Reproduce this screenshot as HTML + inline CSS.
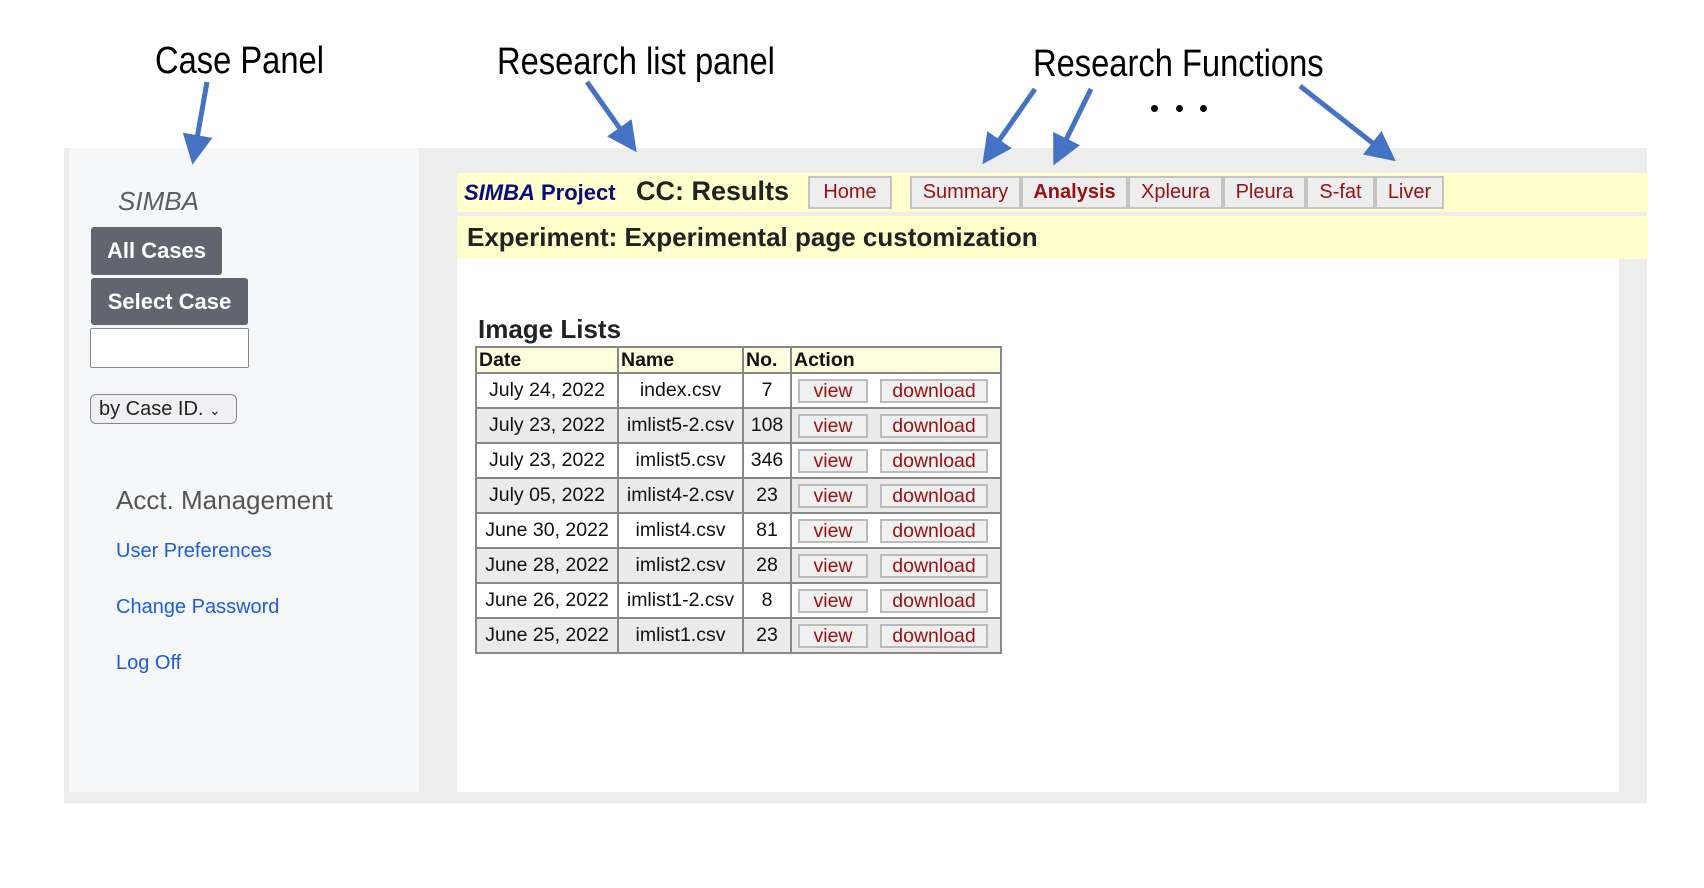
<!DOCTYPE html>
<html><head><meta charset="utf-8"><style>
*{margin:0;padding:0;box-sizing:border-box}
body{width:1704px;height:888px;background:#fff;position:relative;overflow:hidden;font-family:"Liberation Sans",Arial,sans-serif}
.a{position:absolute}
.ann{position:absolute;font-family:"Liberation Sans Narrow","Liberation Sans",sans-serif;font-size:38px;color:#000;line-height:1;white-space:nowrap;transform:scaleX(0.86);transform-origin:0 0}
.btn{position:absolute;background:#5f6670;color:#fff;font-weight:bold;font-size:22px;border-radius:3px;display:flex;align-items:center;justify-content:center}
.link{position:absolute;color:#1a5ce6;font-size:20px;white-space:nowrap}
.tab{position:absolute;top:176px;height:33px;background:#eeeeee;border:2px solid #c4c4c4;color:#9b1010;font-size:20px;display:flex;align-items:center;justify-content:center}
table{position:absolute;left:475px;top:346px;border-collapse:collapse;font-size:19.5px;color:#111}
td{border:2px solid #888;height:35px;text-align:center;padding:0 3px;white-space:nowrap}
tr.h td{background:#ffffe0;font-weight:bold;text-align:left;height:26px;padding:0 2px}
tr.g td{background:#ebebeb}
td.ac{text-align:left;padding-left:6px}
.vb,.db{display:inline-block;border:2px solid #bbb;background:#f0f0f0;color:#9b1010;height:24px;line-height:20px;font-size:19.5px;text-align:center}
.vb{width:70px}.db{width:108px;margin-left:12px}
</style></head><body>
<div class="ann" style="left:155px;top:42px">Case Panel</div>
<div class="ann" style="left:497px;top:43px">Research list panel</div>
<div class="ann" style="left:1033px;top:45px">Research Functions</div>
<div class="a" style="left:1151px;top:105px;width:7px;height:7px;background:#000;border-radius:50%"></div>
<div class="a" style="left:1176px;top:105px;width:7px;height:7px;background:#000;border-radius:50%"></div>
<div class="a" style="left:1200px;top:105px;width:7px;height:7px;background:#000;border-radius:50%"></div>
<div class="a" style="left:64px;top:148px;width:1583px;height:655px;background:#ededed"></div>
<div class="a" style="left:69px;top:148px;width:350px;height:644px;background:#f6f7f9"></div>
<div class="a" style="left:457px;top:259px;width:1162px;height:533px;background:#fff"></div>
<div class="a" style="left:457px;top:173px;width:1191px;height:39px;background:#ffffcc"></div>
<div class="a" style="left:457px;top:216px;width:1191px;height:43px;background:#ffffcc"></div>
<svg class="a" style="left:0;top:0;z-index:5" width="1704" height="888">
<defs><marker id="m" markerWidth="6" markerHeight="6" refX="3" refY="3" orient="auto"><path d="M0,0 L6,3 L0,6 Z" fill="#4472c4"/></marker></defs>
<g stroke="#4472c4" stroke-width="5" fill="none" marker-end="url(#m)">
<line x1="207" y1="82" x2="195" y2="150"/>
<line x1="587" y1="82" x2="628" y2="140"/>
<line x1="1035" y1="89" x2="991" y2="152"/>
<line x1="1091" y1="89" x2="1060" y2="152"/>
<line x1="1300" y1="86" x2="1384" y2="152"/>
</g></svg>
<div class="a" style="left:118px;top:186px;font-size:26px;font-style:italic;color:#5a5f66">SIMBA</div>
<div class="btn" style="left:91px;top:227px;width:131px;height:48px">All Cases</div>
<div class="btn" style="left:91px;top:278px;width:157px;height:47px">Select Case</div>
<div class="a" style="left:90px;top:328px;width:159px;height:40px;background:#fff;border:1px solid #888;border-radius:2px"></div>
<div class="a" style="left:90px;top:394px;width:147px;height:30px;background:#f0f0f2;border:1px solid #888;border-radius:6px;font-size:20px;padding:3px 8px;color:#222">by Case ID. <span style="font-size:14px">&#8964;</span></div>
<div class="a" style="left:116px;top:485px;font-size:26px;color:#555">Acct. Management</div>
<div class="link" style="left:116px;top:540px">User Preferences</div>
<div class="link" style="left:116px;top:596px">Change Password</div>
<div class="link" style="left:116px;top:652px">Log Off</div>
<div class="a" style="left:464px;top:180px;font-size:22px;font-weight:bold;color:#0a0a80"><i>SIMBA</i> Project</div>
<div class="a" style="left:636px;top:176px;font-size:27px;font-weight:bold;color:#222">CC: Results</div>
<div class="tab" style="left:808px;width:84px">Home</div>
<div class="tab" style="left:910px;width:111px">Summary</div>
<div class="tab" style="left:1021px;width:107px;font-weight:bold">Analysis</div>
<div class="tab" style="left:1128px;width:95px">Xpleura</div>
<div class="tab" style="left:1223px;width:83px">Pleura</div>
<div class="tab" style="left:1306px;width:69px">S-fat</div>
<div class="tab" style="left:1375px;width:69px">Liver</div>
<div class="a" style="left:467px;top:222px;font-size:26px;font-weight:bold;color:#222">Experiment: Experimental page customization</div>
<div class="a" style="left:478px;top:314px;font-size:26px;font-weight:bold;color:#222">Image Lists</div>
<table>
<tr class="h"><td style="width:142px">Date</td><td style="width:125px">Name</td><td style="width:48px">No.</td><td style="width:210px">Action</td></tr>
<tr><td>July 24, 2022</td><td>index.csv</td><td>7</td><td class="ac"><span class="vb">view</span><span class="db">download</span></td></tr>
<tr class="g"><td>July 23, 2022</td><td>imlist5-2.csv</td><td>108</td><td class="ac"><span class="vb">view</span><span class="db">download</span></td></tr>
<tr><td>July 23, 2022</td><td>imlist5.csv</td><td>346</td><td class="ac"><span class="vb">view</span><span class="db">download</span></td></tr>
<tr class="g"><td>July 05, 2022</td><td>imlist4-2.csv</td><td>23</td><td class="ac"><span class="vb">view</span><span class="db">download</span></td></tr>
<tr><td>June 30, 2022</td><td>imlist4.csv</td><td>81</td><td class="ac"><span class="vb">view</span><span class="db">download</span></td></tr>
<tr class="g"><td>June 28, 2022</td><td>imlist2.csv</td><td>28</td><td class="ac"><span class="vb">view</span><span class="db">download</span></td></tr>
<tr><td>June 26, 2022</td><td>imlist1-2.csv</td><td>8</td><td class="ac"><span class="vb">view</span><span class="db">download</span></td></tr>
<tr class="g"><td>June 25, 2022</td><td>imlist1.csv</td><td>23</td><td class="ac"><span class="vb">view</span><span class="db">download</span></td></tr>
</table>
</body></html>
